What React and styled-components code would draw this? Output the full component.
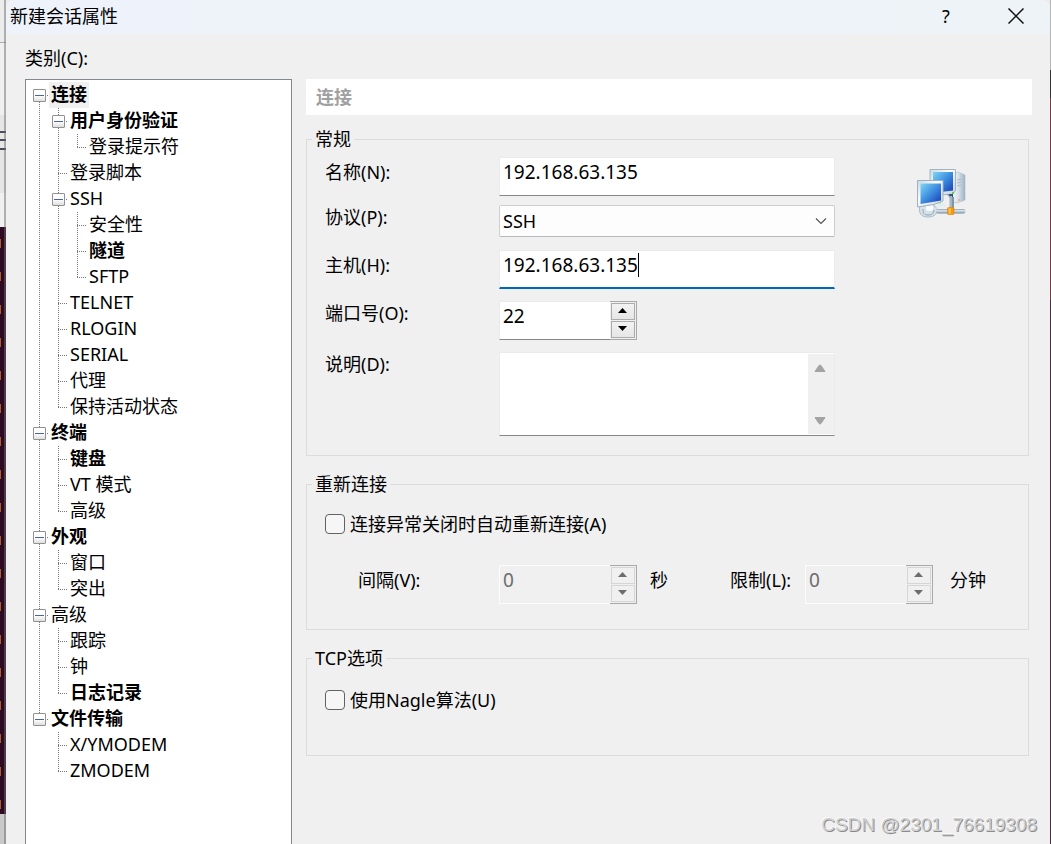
import React, { useState } from "react";
import styled, { createGlobalStyle, css } from "styled-components";

const GlobalStyle = createGlobalStyle`
  * {
    box-sizing: border-box;
  }
  body {
    margin: 0;
    overflow: hidden;
    font-family: "Noto Sans", "Noto Sans CJK SC", sans-serif;
    font-size: 18px;
    font-weight: 390;
    line-height: 24px;
    color: #000;
  }
  button, input, select, textarea {
    margin: 0;
    padding: 0;
    border: 0;
    border-radius: 0;
    outline: none;
    background: none;
    font: inherit;
    color: inherit;
  }
`;

const Desktop = styled.div`
  display: flex;
  height: 100vh;
  overflow: hidden;
  background: linear-gradient(
    #ececec 42px,
    #b0b0b0 42px 43px,
    #f0f0f0 43px 115px,
    #e6e6e6 115px 131px,
    #4b4b5b 131px 133px,
    #e6e6e6 133px 139px,
    #4b4b5b 139px 141px,
    #e6e6e6 141px 148px,
    #4b4b5b 148px 150px,
    #e6e6e6 150px 193px,
    #f0f0f0 193px 227px,
    #2d0922 227px 814px,
    #c9c9c9 814px
  );
`;
const LeftEdge = styled.div`
  flex: none;
  width: 6px;
  padding: 227px 3px 30px 0;
  border-right: 2px solid rgba(110, 110, 110, 0.5);
  background: repeating-linear-gradient(transparent 0 12px, #a8602f 12px 21px, transparent 21px 33px)
    content-box;
`;
const RightEdge = styled.div`
  flex: none;
  width: 1px;
  background: linear-gradient(#b5b5b5 70px, #333 70px 98px, #7c3a48 98px 300px, #4a2d42 300px);
`;
const Dialog = styled.main`
  flex: 1;
  min-width: 0;
  display: flex;
  flex-direction: column;
  background: #f0f0f0;
  border-radius: 8px 8px 0 0;
  overflow: hidden;
`;
const TitleBar = styled.header`
  flex: none;
  display: flex;
  align-items: center;
  height: 34px;
  padding: 0 18px 2px 4px;
  background: linear-gradient(90deg, #eef3fb, #edf3f7);
`;
const Title = styled.h1`
  flex: 1;
  margin: 0;
  font-size: 18px;
  font-weight: inherit;
`;
const TitleButton = styled.button`
  display: flex;
  align-items: center;
  justify-content: center;
  width: 32px;
  height: 32px;
  margin-left: 38px;
`;
const Body = styled.div`
  flex: 1;
  min-height: 0;
  display: flex;
  gap: 14px;
  padding: 12px 18px 0 19px;
`;

/* 类别 */
const Sidebar = styled.nav`
  flex: none;
  display: flex;
  flex-direction: column;
  width: 267px;
`;
const Category = styled.div`
  height: 33px;
`;
const Tree = styled.ul`
  flex: 1;
  margin: 0;
  padding: 2px 4px;
  list-style: none;
  background: #fff;
  border: 1px solid #828790;
  border-bottom: 0;
  overflow: hidden;
`;
const SubTree = styled.ul`
  margin: 0;
  padding: 0;
  list-style: none;
`;
const TreeRow = styled.div`
  display: flex;
  height: 26px;
`;

const dotsV = "repeating-linear-gradient(#777 0 1px, transparent 1px 2px)";
const dotsH = "repeating-linear-gradient(90deg, #777 0 1px, transparent 1px 2px)";

const Guide = styled.span`
  flex: none;
  display: flex;
  align-items: center;
  justify-content: center;
  width: 19px;
  background-repeat: no-repeat;
  ${({ $up, $down, $branch }) => css`
    background-image: ${dotsV}, ${dotsV}, ${dotsH};
    background-position: 9px 0, 9px 14px, 9px 13px;
    background-size: ${$up ? "1px 14px" : "0 0"}, ${$down ? "1px 12px" : "0 0"},
      ${$branch ? "10px 1px" : "0 0"};
  `}
`;
const Toggle = styled.button`
  display: flex;
  align-items: center;
  justify-content: center;
  width: 13px;
  height: 13px;
  background: linear-gradient(#fff 50%, #dedede);
  border: 1px solid #919191;
  border-radius: 1px;
  &::before {
    content: "";
    width: 9px;
    height: 1px;
    background: #4b63a7;
  }
`;
const NodeLabel = styled.span`
  padding: 0 2px;
  line-height: 24px;
  white-space: nowrap;
  font-weight: ${(props) => (props.$bold ? "bold" : "inherit")};
  background: ${(props) => (props.$selected ? "#f0f0f0" : "none")};
`;

/* 右侧面板 */
const Panel = styled.section`
  flex: 1;
  min-width: 0;
`;
const PanelTitle = styled.h2`
  height: 36px;
  margin: 33px 0 12px;
  padding: 0 10px;
  line-height: 36px;
  font-size: 18px;
  font-weight: bold;
  color: #a0a0a0;
  background: #fff;
`;
const Group = styled.fieldset`
  min-width: 0;
  height: ${(props) => props.$height}px;
  margin: 0 3px 16px 0;
  padding: ${(props) => props.$top}px 18px 0;
  border: 1px solid #dcdcdc;
`;
const Legend = styled.legend`
  margin-left: -13px;
  padding: 0 3px;
`;
const General = styled.div`
  display: flex;
  align-items: flex-start;
`;
const Fields = styled.div`
  flex: 0 1 510px;
`;
const Field = styled.div`
  display: grid;
  grid-template-columns: 174px minmax(0, 1fr);
  align-items: start;
  margin-bottom: ${(props) => props.$gap}px;
`;
const Label = styled.label`
  line-height: ${(props) => (props.$tall ? 30 : 24)}px;
  white-space: nowrap;
`;
const editBox = css`
  font-size: 19px;
  line-height: 24px;
  background: #fff;
  border: 1px solid #ebebeb;
  border-bottom-color: #868686;
`;
const TextBox = styled.input`
  ${editBox}
  width: 100%;
  height: 39px;
  padding: 2px 3px 11px;
`;
const FocusBox = styled.div`
  ${editBox}
  display: flex;
  height: 39px;
  padding: 2px 3px 0;
  border-bottom: 2px solid #0067c0;
`;
const FocusInput = styled.input`
  field-sizing: content;
  height: 24px;
`;
const Caret = styled.span`
  width: 1px;
  height: 24px;
  background: #000;
`;
const SelectWrap = styled.div`
  display: grid;
  align-items: center;
  height: 32px;
  background: #fdfdfd;
  border: 1px solid #cfcfcf;
  border-bottom-color: #b9b9b9;
  border-radius: 2px;
  > * {
    grid-area: 1 / 1;
  }
`;
const Select = styled.select`
  appearance: none;
  width: 100%;
  height: 30px;
  padding: 0 3px;
`;
const Chevron = styled.svg`
  justify-self: end;
  margin-right: 7px;
  pointer-events: none;
`;
const Spinner = styled.div`
  display: flex;
  width: ${(props) => props.$width}px;
  height: 39px;
`;
const SpinInput = styled.input`
  ${editBox}
  flex: 1;
  min-width: 0;
  padding: 2px 3px 11px;
  border-right: 0;
  &:disabled {
    color: #6d6d6d;
    background: #f0f0f0;
    border-color: #fcfcfc;
  }
`;
const SpinButtons = styled.div`
  display: flex;
  flex-direction: column;
  gap: 1px;
  width: 27px;
  padding: 1px;
  border: 1px solid #a9a9ad;
  border-left: 0;
`;
const SpinButton = styled.button`
  flex: 1;
  display: flex;
  align-items: center;
  justify-content: center;
  padding: 0 2px 2px 0;
  background: linear-gradient(#f2f2f2, #e6e6e6);
  border: 1px solid #acacac;
  &:disabled {
    color: #6d6d6d;
    background: #f0f0f0;
    border-color: #d6d6d6;
  }
`;
const MemoBox = styled.div`
  ${editBox}
  display: flex;
  height: 84px;
`;
const Memo = styled.textarea`
  flex: 1;
  min-width: 0;
  padding: 3px;
  resize: none;
  overflow: hidden;
`;
const ScrollBar = styled.div`
  display: flex;
  flex-direction: column;
  justify-content: space-between;
  width: 26px;
  margin: 1px 0;
  padding: 9px 8px 8px 6px;
  background: #f0f0f0;
`;
const ScrollButton = styled.button`
  height: 10px;
  line-height: 0;
`;
const CheckRow = styled.label`
  display: flex;
  align-items: center;
  gap: 5px;
  width: fit-content;
  height: 24px;
`;
const CheckBox = styled.input`
  appearance: none;
  width: 20px;
  height: 20px;
  background: #f6f6f6;
  border: 1px solid #626262;
  border-radius: 4px;
`;
const Interval = styled.div`
  display: flex;
  margin-top: 29px;
  padding-left: 33px;
`;
const IntervalLabel = styled(Label)`
  width: ${(props) => props.$width}px;
`;
const Unit = styled.span`
  width: 80px;
  margin-left: 13px;
  line-height: 30px;
`;
const LastUnit = styled.span`
  margin-left: 17px;
  line-height: 30px;
`;
const SessionIcon = styled.svg`
  flex: none;
  margin: 11px 0 0 81px;
`;
const Watermark = styled.div`
  position: absolute;
  right: 14px;
  bottom: 9px;
  font: 19px/20px "Liberation Sans", sans-serif;
  color: #cfcfcf;
  text-shadow: 1px 1px 0 #8c8c8c, -1px -1px 0 #fafafa;
`;

const categories = [
  {
    name: "连接",
    bold: true,
    selected: true,
    children: [
      { name: "用户身份验证", bold: true, children: [{ name: "登录提示符" }] },
      { name: "登录脚本" },
      {
        name: "SSH",
        children: [{ name: "安全性" }, { name: "隧道", bold: true }, { name: "SFTP" }],
      },
      { name: "TELNET" },
      { name: "RLOGIN" },
      { name: "SERIAL" },
      { name: "代理" },
      { name: "保持活动状态" },
    ],
  },
  {
    name: "终端",
    bold: true,
    children: [{ name: "键盘", bold: true }, { name: "VT 模式" }, { name: "高级" }],
  },
  { name: "外观", bold: true, children: [{ name: "窗口" }, { name: "突出" }] },
  {
    name: "高级",
    children: [{ name: "跟踪" }, { name: "钟" }, { name: "日志记录", bold: true }],
  },
  {
    name: "文件传输",
    bold: true,
    children: [{ name: "X/YMODEM" }, { name: "ZMODEM" }],
  },
];

// guides: for every ancestor level, whether its line goes on below this row
const TreeNode = ({ node, guides, isRoot, isLast }) => {
  const [open, setOpen] = useState(true);
  return (
    <li>
      <TreeRow>
        {guides.map((on, i) => (
          <Guide key={i} $up={on} $down={on} />
        ))}
        <Guide $up={!isRoot} $down={!isLast} $branch>
          {node.children && (
            <Toggle type="button" aria-label={node.name} onClick={() => setOpen(!open)} />
          )}
        </Guide>
        <NodeLabel $bold={node.bold} $selected={node.selected}>
          {node.name}
        </NodeLabel>
      </TreeRow>
      {node.children && open && (
        <SubTree>
          {node.children.map((child, i) => (
            <TreeNode
              key={child.name}
              node={child}
              guides={[...guides, !isLast]}
              isLast={i === node.children.length - 1}
            />
          ))}
        </SubTree>
      )}
    </li>
  );
};

const Arrow = ({ down }) => (
  <svg width="9" height="5" viewBox="0 0 9 5" fill="currentColor">
    <path d={down ? "M0 0h9L4.500 5z" : "M0 5h9L4.500 0z"} />
  </svg>
);

const ScrollArrow = ({ down }) => (
  <svg width="12" height="10" viewBox="0 0 12 10" fill="#a3a3a3" stroke="#a3a3a3" strokeLinejoin="round">
    <path d={down ? "M1 1.500h10L7 7.500q-1 1-2 0z" : "M1 8.500h10L7 2.500q-1-1-2 0z"} />
  </svg>
);

const Spin = ({ id, label, value, width, disabled }) => (
  <Spinner $width={width}>
    <SpinInput id={id} defaultValue={value} disabled={disabled} />
    <SpinButtons>
      <SpinButton type="button" aria-label={label + " +"} disabled={disabled}>
        <Arrow />
      </SpinButton>
      <SpinButton type="button" aria-label={label + " -"} disabled={disabled}>
        <Arrow down />
      </SpinButton>
    </SpinButtons>
  </Spinner>
);

const Computers = () => (
  <SessionIcon width="52" height="52" viewBox="0 0 52 52">
    <defs>
      <linearGradient id="screen" x1="0" y1="0" x2="1" y2="1">
        <stop offset="0" stopColor="#7fd6f5" />
        <stop offset="0.5" stopColor="#3d8ddf" />
        <stop offset="1" stopColor="#1439b4" />
      </linearGradient>
      <linearGradient id="frame" x1="0" y1="0" x2="1" y2="1">
        <stop offset="0" stopColor="#c9d6df" />
        <stop offset="0.4" stopColor="#fbfdfe" />
        <stop offset="1" stopColor="#c3d0da" />
      </linearGradient>
      <linearGradient id="tower" x1="0" y1="0" x2="1" y2="0">
        <stop offset="0" stopColor="#f6f8fa" />
        <stop offset="0.5" stopColor="#dbe3ea" />
        <stop offset="1" stopColor="#9db3c6" />
      </linearGradient>
      <linearGradient id="pipe" x1="0" y1="0" x2="0" y2="1">
        <stop offset="0" stopColor="#8fa0ac" />
        <stop offset="0.4" stopColor="#dfe8ee" />
        <stop offset="1" stopColor="#71879a" />
      </linearGradient>
    </defs>
    <path d="M35 7l7-3 7 3v25l-8 3-6-2z" fill="url(#tower)" stroke="#a9bac8" strokeWidth="0.600" />
    <path d="M41 12l4-1M41 15l4-1M41 18l4-1" stroke="#a6b4c0" strokeWidth="0.800" />
    <circle cx="43" cy="32" r="1" fill="#f2a488" />
    <path d="M14 1.500h25.500V23l-4 3.500L14 27z" fill="url(#frame)" stroke="#a4b5c1" />
    <path d="M17 4h20v18.500L17 25z" fill="url(#screen)" />
    <path d="M31 26h6l-1 3h2v12h-3.500V31z" fill="#7f97aa" />
    <path d="M33 26h4v3h-3z" fill="#285779" />
    <rect x="36" y="24" width="2" height="2" fill="#62c956" />
    <path d="M4 37c-2 8 1 12 8 12s10-4 9-9l-4-3z" fill="#d7e1e9" stroke="#9cafbe" strokeWidth="0.800" />
    <path d="M7 41c0 4 1 6 5 6s6-2 6-5" fill="none" stroke="#8aa1b3" strokeWidth="1" />
    <path d="M10 36h7v6q-3 2-7 0z" fill="#f8fbfc" />
    <path d="M20 38q5-6 10-2v3q-5-2-9 3z" fill="#e6edf2" />
    <rect x="20" y="41" width="29.500" height="4.500" rx="2" fill="url(#pipe)" />
    <rect x="33.500" y="28" width="2.500" height="13" fill="#a4b6c3" />
    <rect x="31.500" y="39.500" width="6.500" height="7" rx="1" fill="#f79a0b" stroke="#e07b06" strokeWidth="0.600" />
    <path d="M32.500 40.500h2.500v5h-2.500z" fill="#ffc04a" />
    <path d="M1.500 12.500H27V33l-9 3.500L1.500 39z" fill="url(#frame)" stroke="#9fb1bf" />
    <path d="M4.500 15.500H25v17L4.500 36z" fill="url(#screen)" />
    <rect x="22.500" y="34" width="2.500" height="1.500" fill="#8ce07c" />
  </SessionIcon>
);

const App = () => {
  return (
    <>
      <GlobalStyle />
      <Desktop>
        <LeftEdge />
        <Dialog>
          <TitleBar>
            <Title>新建会话属性</Title>
            <TitleButton type="button">?</TitleButton>
            <TitleButton type="button" aria-label="关闭">
              <svg width="16" height="16" viewBox="0 0 16 16" stroke="#111" strokeWidth="1.500">
                <path d="M0.500 0.500l15 15M15.500 0.500l-15 15" />
              </svg>
            </TitleButton>
          </TitleBar>
          <Body>
            <Sidebar>
              <Category>类别(C):</Category>
              <Tree>
                {categories.map((node, i) => (
                  <TreeNode
                    key={node.name}
                    node={node}
                    guides={[]}
                    isRoot={i === 0}
                    isLast={i === categories.length - 1}
                  />
                ))}
              </Tree>
            </Sidebar>
            <Panel>
              <PanelTitle>连接</PanelTitle>
              <Group $height={329} $top={6}>
                <Legend>常规</Legend>
                <General>
                  <Fields>
                    <Field $gap={9}>
                      <Label htmlFor="name" $tall>名称(N):</Label>
                      <TextBox id="name" defaultValue="192.168.63.135" />
                    </Field>
                    <Field $gap={13}>
                      <Label htmlFor="protocol">协议(P):</Label>
                      <SelectWrap>
                        <Select id="protocol" defaultValue="SSH">
                          <option>SSH</option>
                          <option>TELNET</option>
                          <option>RLOGIN</option>
                          <option>SERIAL</option>
                        </Select>
                        <Chevron width="12" height="8" viewBox="0 0 12 8" fill="none" stroke="#555" strokeWidth="1.200">
                          <path d="M1 1.500l5 5 5-5" />
                        </Chevron>
                      </SelectWrap>
                    </Field>
                    <Field $gap={12}>
                      <Label htmlFor="host" $tall>主机(H):</Label>
                      <FocusBox>
                        <FocusInput id="host" defaultValue="192.168.63.135" />
                        <Caret />
                      </FocusBox>
                    </Field>
                    <Field $gap={12}>
                      <Label htmlFor="port">端口号(O):</Label>
                      <Spin id="port" label="端口号" value="22" width={138} />
                    </Field>
                    <Field $gap={0}>
                      <Label htmlFor="memo">说明(D):</Label>
                      <MemoBox>
                        <Memo id="memo" />
                        <ScrollBar>
                          <ScrollButton type="button" aria-label="向上">
                            <ScrollArrow />
                          </ScrollButton>
                          <ScrollButton type="button" aria-label="向下">
                            <ScrollArrow down />
                          </ScrollButton>
                        </ScrollBar>
                      </MemoBox>
                    </Field>
                  </Fields>
                  <Computers />
                </General>
              </Group>
              <Group $height={158} $top={16}>
                <Legend>重新连接</Legend>
                <CheckRow>
                  <CheckBox type="checkbox" />
                  连接异常关闭时自动重新连接(A)
                </CheckRow>
                <Interval>
                  <IntervalLabel htmlFor="interval" $tall $width={141}>间隔(V):</IntervalLabel>
                  <Spin id="interval" label="间隔" value="0" width={138} disabled />
                  <Unit>秒</Unit>
                  <IntervalLabel htmlFor="limit" $tall $width={75}>限制(L):</IntervalLabel>
                  <Spin id="limit" label="限制" value="0" width={128} disabled />
                  <LastUnit>分钟</LastUnit>
                </Interval>
              </Group>
              <Group $height={110} $top={18}>
                <Legend>TCP选项</Legend>
                <CheckRow>
                  <CheckBox type="checkbox" />
                  使用Nagle算法(U)
                </CheckRow>
              </Group>
            </Panel>
          </Body>
        </Dialog>
        <RightEdge />
      </Desktop>
      <Watermark>CSDN @2301_76619308</Watermark>
    </>
  );
};

export default App;
